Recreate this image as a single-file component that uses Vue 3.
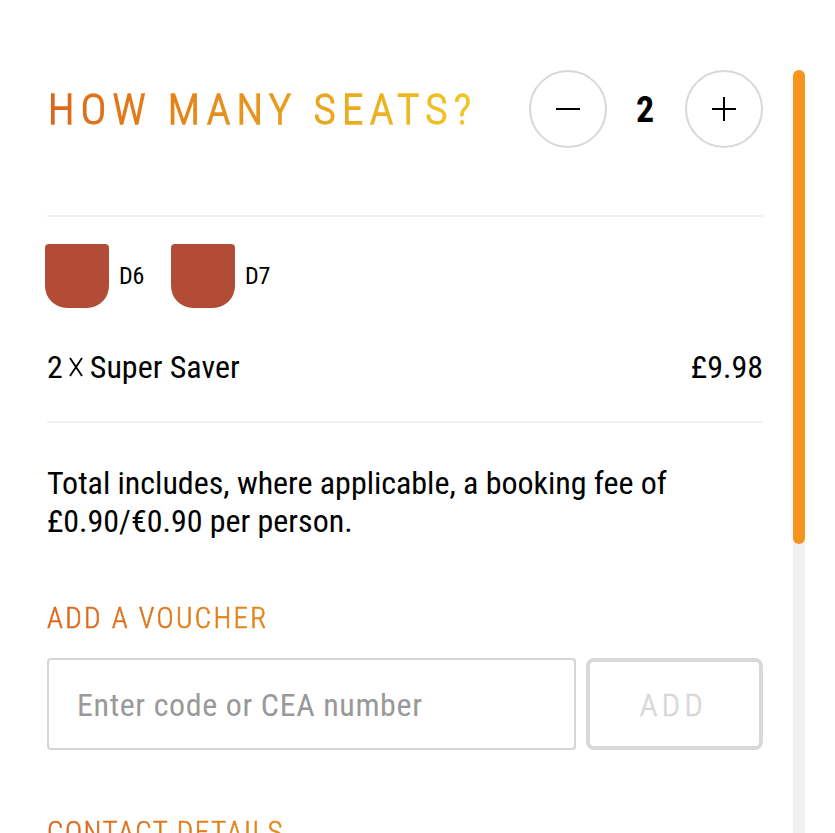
<script setup>
import { ref, computed } from 'vue'

const seats = ref(['D6', 'D7'])
const seatPrice = 4.99
const voucher = ref('')

const count = computed(() => seats.value.length)
const total = computed(() => (count.value * seatPrice).toFixed(2))

function removeSeat() {
  if (count.value > 1) seats.value.pop()
}

function addSeat() {
  seats.value.push('D' + (count.value + 6))
}
</script>

<template>
  <div class="booking">
    <main class="content">
      <header class="seats-header">
        <h1 class="title">How many seats?</h1>
        <div class="stepper">
          <button class="step-btn" aria-label="Remove seat" @click="removeSeat">
            <svg viewBox="0 0 24 24"><path d="M0 12h24" /></svg>
          </button>
          <span class="count">{{ count }}</span>
          <button class="step-btn" aria-label="Add seat" @click="addSeat">
            <svg viewBox="0 0 24 24"><path d="M0 12h24M12 0v24" /></svg>
          </button>
        </div>
      </header>

      <section class="summary">
        <ul class="seat-list">
          <li v-for="seat in seats" :key="seat" class="seat">
            <span class="seat-icon"></span>
            <span class="seat-name">{{ seat }}</span>
          </li>
        </ul>
        <div class="ticket-row">
          <span class="ticket">
            {{ count }}<svg class="times" viewBox="0 0 14 20"><path d="M1 1l12 18M13 1L1 19" /></svg>Super Saver
          </span>
          <span class="price">£{{ total }}</span>
        </div>
      </section>

      <p class="note">Total includes, where applicable, a booking fee of £0.90/€0.90 per person.</p>

      <h2 class="subtitle">Add a voucher</h2>
      <div class="voucher">
        <input v-model="voucher" class="voucher-input" type="text" placeholder="Enter code or CEA number" />
        <button class="voucher-btn" :disabled="!voucher">ADD</button>
      </div>

      <h2 class="subtitle contact">Contact details</h2>
    </main>
    <div class="scroll-track"><div class="scroll-thumb"></div></div>
  </div>
</template>

<style>
body {
  margin: 0;
  background: #fff;
}
</style>

<style scoped>
.booking {
  box-sizing: border-box;
  display: flex;
  height: 833px;
  padding: 70px 30px 0 47px;
  overflow: hidden;
  color: #000;
  font-family: 'Roboto Condensed', Roboto, 'Liberation Sans', sans-serif;
  font-stretch: 75%;
  font-size: 32px;
  line-height: 38px;
}

.content {
  width: 716px;
  margin-right: 30px;
}

.seats-header {
  display: flex;
  align-items: center;
  justify-content: space-between;
  height: 78px;
}

.title,
.subtitle {
  margin: 0;
  font-weight: 300;
  text-transform: uppercase;
  white-space: nowrap;
  color: transparent;
  background: linear-gradient(100deg, #dc641c, #e17a18 20%, #f0c424 90%);
  -webkit-background-clip: text;
  background-clip: text;
  -webkit-text-stroke: 0.6px transparent;
}

.title {
  width: 452px;
  font-size: 43px;
  line-height: 78px;
  letter-spacing: 6.3px;
  text-indent: 1px;
  -webkit-text-stroke-width: 1.3px;
}

.stepper {
  display: flex;
  align-items: center;
  justify-content: space-between;
  width: 234px;
}

.step-btn {
  display: flex;
  align-items: center;
  justify-content: center;
  box-sizing: border-box;
  width: 78px;
  height: 78px;
  padding: 0;
  border: 2px solid #d8d8d8;
  border-radius: 50%;
  background: none;
  cursor: pointer;
}

.step-btn svg {
  width: 24px;
  height: 24px;
  fill: none;
  stroke: #000;
  stroke-width: 2;
}

.count {
  margin: 2px 2px 0 0;
  font-size: 36px;
  font-weight: 700;
}

.summary {
  margin-top: 67px;
  border-top: 2px solid #f1f1f1;
  border-bottom: 2px solid #f1f1f1;
}

.seat-list {
  display: flex;
  margin: 27px 0 0 -2px;
  padding: 0;
  list-style: none;
}

.seat {
  display: flex;
  align-items: center;
  width: 126px;
}

.seat-icon {
  width: 64px;
  height: 64px;
  border-radius: 4px 4px 22px 22px;
  background: #b24c36;
}

.seat-name {
  margin-left: 10px;
  font-size: 24px;
  letter-spacing: -0.3px;
}

.ticket-row {
  display: flex;
  justify-content: space-between;
  padding: 40px 0 35px;
}

.times {
  width: 14px;
  height: 20px;
  margin: 0 7px 0 6px;
  vertical-align: 1px;
  fill: none;
  stroke: #000;
  stroke-width: 1.8;
}

.note {
  margin: 41px 0 0;
  letter-spacing: -0.02px;
}

.subtitle {
  margin-top: 59px;
  font-size: 29px;
  line-height: 38px;
  letter-spacing: 2.3px;
}

.voucher {
  display: flex;
  gap: 10px;
  height: 92px;
  margin-top: 21px;
}

.voucher-input {
  box-sizing: border-box;
  width: 529px;
  padding: 2px 28px 0;
  border: 2px solid #d5d5d5;
  border-radius: 4px;
  outline: none;
  background: #fff;
  color: #000;
  font: inherit;
  font-stretch: 75%;
  letter-spacing: 0.62px;
}

.voucher-input::placeholder {
  color: #999;
  opacity: 1;
}

.voucher-btn {
  box-sizing: border-box;
  flex: 1;
  padding: 2px 2px 0 0;
  border: 4px solid #d8d8d8;
  border-radius: 8px;
  background: #fff;
  color: #d8d8d8;
  font: inherit;
  font-weight: 300;
  letter-spacing: 4.5px;
  -webkit-text-stroke: 0.7px #d8d8d8;
}

.contact {
  margin-top: 63px;
  letter-spacing: 1.5px;
}

.scroll-track {
  width: 12px;
  height: 763px;
  background: #f1f1f1;
  border-radius: 6px 6px 0 0;
}

.scroll-thumb {
  height: 474px;
  border-radius: 6px;
  background: #f7941d;
}
</style>
